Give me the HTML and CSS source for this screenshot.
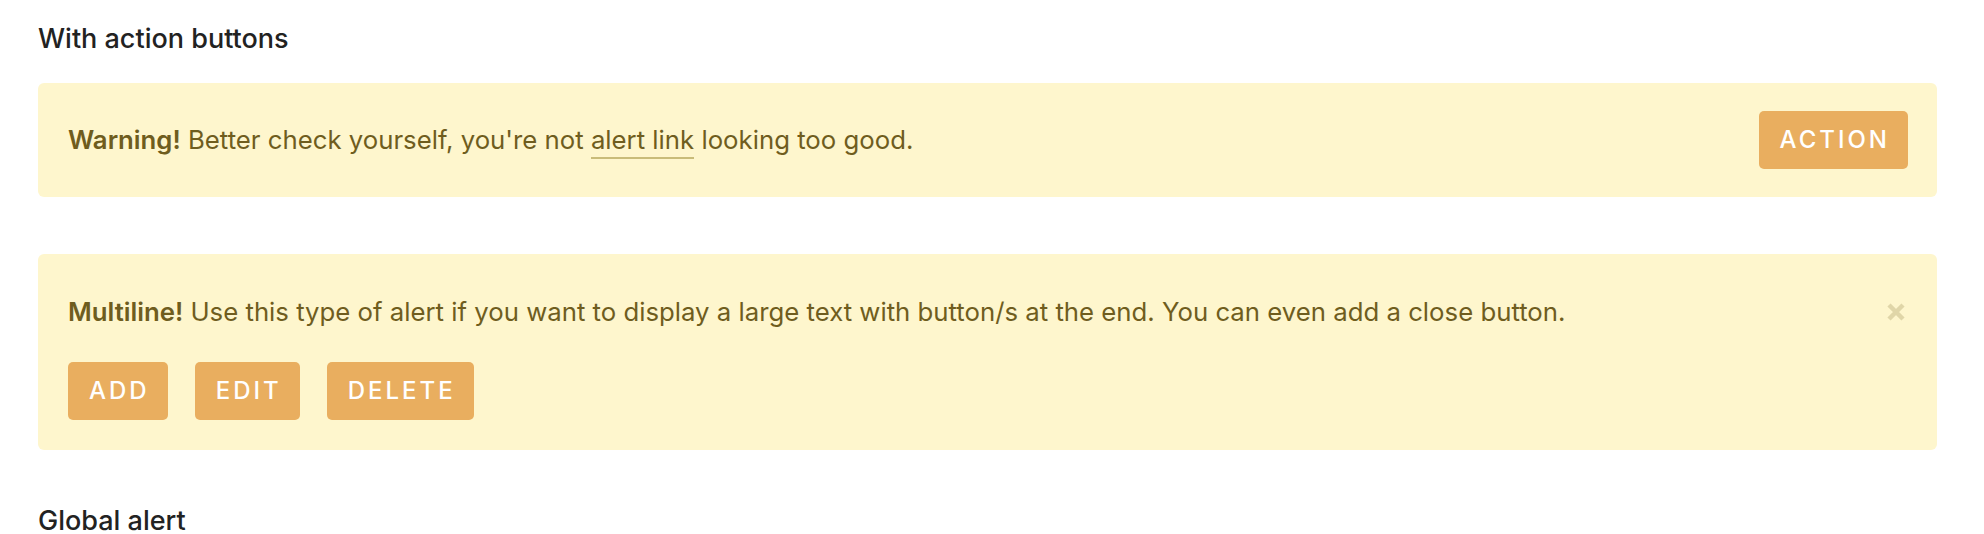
FILE: index.html
```html
<!DOCTYPE html>
<html lang="en">
<head>
    <meta charset="UTF-8">
    <meta name="viewport" content="width=device-width, initial-scale=1.0">
    <title>Alerts</title>
    <link rel="stylesheet" href="styles.css">
</head>
<body>
    <div class="page">
        <h2 class="section-title">With action buttons</h2>

        <div class="alert alert-row">
            <p class="alert-text"><strong>Warning!</strong> Better check yourself, you're not <a href="#" class="alert-link">alert link</a> looking too good.</p>
            <button class="btn">Action</button>
        </div>

        <div class="alert alert-multi">
            <div class="alert-head">
                <p class="alert-text"><strong>Multiline!</strong> Use this type of alert if you want to display a large text with button/s at the end. You can even add a close button.</p>
                <button class="close" aria-label="Close">
                    <svg width="20" height="20" viewBox="0 0 20 20">
                        <path d="M3 3 L17 17 M17 3 L3 17" stroke="currentColor" stroke-width="4.5"/>
                    </svg>
                </button>
            </div>
            <div class="alert-actions">
                <button class="btn">Add</button>
                <button class="btn">Edit</button>
                <button class="btn">Delete</button>
            </div>
        </div>

        <h2 class="section-title">Global alert</h2>
    </div>
</body>
</html>
```

FILE: styles.css
```css
body {
    margin: 0;
    font-family: Inter, "Noto Sans", sans-serif;
    background-color: #fff;
}

.page {
    padding: 23px 47px 0 38px;
}

.section-title {
    margin: 0;
    font-size: 27px;
    line-height: 32px;
    font-weight: 500;
    color: #222;
}

.alert {
    background-color: #fef6cd;
    border-radius: 6px;
    color: #6f5d1e;
    margin-top: 28px;
}

.alert-text {
    margin: 0;
    font-size: 25.75px;
    line-height: 32px;
}

.alert-text strong {
    font-weight: 600;
}

.alert-link {
    color: inherit;
    text-decoration: none;
    border-bottom: 2px solid #c9bc79;
    padding-bottom: 2px;
}

.alert-row {
    display: flex;
    align-items: center;
    justify-content: space-between;
    padding: 28px 29px 28px 30px;
}

.alert-multi {
    margin-top: 57px;
    margin-bottom: 55px;
    padding: 42px 30px 30px 30px;
}

.alert-head {
    display: flex;
    justify-content: space-between;
    align-items: center;
}

.close {
    background: none;
    border: none;
    padding: 0;
    margin-right: 1px;
    color: #e0d6a8;
    display: flex;
    cursor: pointer;
}

.alert-actions {
    display: flex;
    gap: 27px;
    margin-top: 34px;
}

.btn {
    background-color: #e9ae5f;
    color: #fff;
    border: none;
    border-radius: 5px;
    font-family: inherit;
    font-size: 24px;
    line-height: 24px;
    font-weight: 500;
    letter-spacing: 3px;
    text-transform: uppercase;
    padding: 17px 18px 17px 21px;
    cursor: pointer;
}
```
